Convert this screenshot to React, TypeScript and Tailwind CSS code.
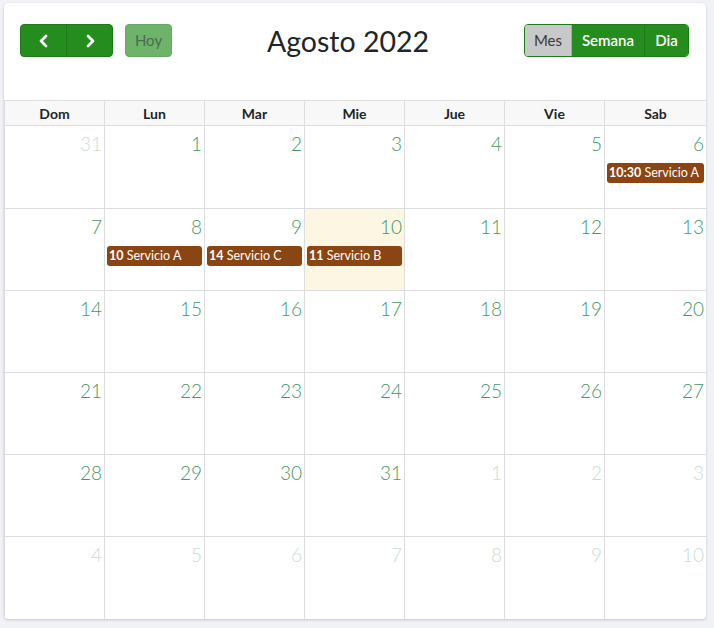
import React from "react";

type Cell = { d: number; out?: boolean; today?: boolean; ev?: { t: string; n: string } };

const weeks: Cell[][] = [
  [{ d: 31, out: true }, { d: 1 }, { d: 2 }, { d: 3 }, { d: 4 }, { d: 5 }, { d: 6, ev: { t: "10:30", n: "Servicio A" } }],
  [{ d: 7 }, { d: 8, ev: { t: "10", n: "Servicio A" } }, { d: 9, ev: { t: "14", n: "Servicio C" } }, { d: 10, today: true, ev: { t: "11", n: "Servicio B" } }, { d: 11 }, { d: 12 }, { d: 13 }],
  [{ d: 14 }, { d: 15 }, { d: 16 }, { d: 17 }, { d: 18 }, { d: 19 }, { d: 20 }],
  [{ d: 21 }, { d: 22 }, { d: 23 }, { d: 24 }, { d: 25 }, { d: 26 }, { d: 27 }],
  [{ d: 28 }, { d: 29 }, { d: 30 }, { d: 31 }, { d: 1, out: true }, { d: 2, out: true }, { d: 3, out: true }],
  [{ d: 4, out: true }, { d: 5, out: true }, { d: 6, out: true }, { d: 7, out: true }, { d: 8, out: true }, { d: 9, out: true }, { d: 10, out: true }],
];

const days = ["Dom", "Lun", "Mar", "Mie", "Jue", "Vie", "Sab"];
const rowH = ["h-[83px]", "h-[82px]", "h-[82px]", "h-[82px]", "h-[82px]", "h-[82px]"];

export default function App() {
  return (
    <div className="min-h-[628px] w-[714px] bg-[#f1f2f6] pt-[3px] pl-[4px]" style={{ fontFamily: "Lato, 'Noto Sans', sans-serif" }}>
      <div className="w-[702px] h-[616px] bg-white rounded-[4px] shadow-[0_1px_3px_rgba(0,0,0,0.18)] overflow-hidden flex flex-col">
        <div className="h-[97px] pl-4 pr-[17px] pt-[21px] flex items-start justify-between">
          <div className="flex items-center gap-3">
            <div className="flex h-[33px] rounded-[4px] overflow-hidden border border-[#1e7a18] bg-[#258c1e]">
              <button className="w-[46px] flex items-center justify-center text-white border-r border-[#1e7a18]">
                <svg width="14" height="14" viewBox="0 0 14 14"><path d="M9 2 L4 7 L9 12" stroke="white" strokeWidth="2.8" fill="none" strokeLinecap="round" strokeLinejoin="round" /></svg>
              </button>
              <button className="w-[45px] flex items-center justify-center text-white">
                <svg width="14" height="14" viewBox="0 0 14 14"><path d="M5 2 L10 7 L5 12" stroke="white" strokeWidth="2.8" fill="none" strokeLinecap="round" strokeLinejoin="round" /></svg>
              </button>
            </div>
            <button className="h-[33px] w-[47px] rounded-[4px] bg-[#6db36a] border border-[#65aa62] text-[#4f6a52] text-[15px]">Hoy</button>
          </div>
          <div className="text-[28.5px] leading-[36px] -mt-[1px] text-[#212529]">Agosto 2022</div>
          <div className="flex h-[33px] rounded-[4px] overflow-hidden border border-[#1e7a18]">
            <button className="w-[47px] bg-[#c8c8c8] text-[#3a3a3a] text-[15px] border-r border-[#aaa]">Mes</button>
            <button className="w-[73px] bg-[#258c1e] text-white text-[15px] font-semibold border-r border-[#1e7a18]">Semana</button>
            <button className="w-[43px] bg-[#258c1e] text-white text-[15px] font-semibold">Dia</button>
          </div>
        </div>
        <div className="grid grid-cols-[100px_100px_100px_100px_100px_100px_101px] border-t border-l border-[#dddddd] bg-[#f8f8f8] h-[26px]">
          {days.map((d, i) => (
            <div key={d} className={`flex items-center justify-center text-[14px] font-bold text-[#212529] border-b border-[#dddddd] ${i < 6 ? "border-r" : ""}`}>{d}</div>
          ))}
        </div>
        <div className="flex flex-col border-l border-[#dddddd]">
          {weeks.map((w, wi) => (
            <div key={wi} className={`grid grid-cols-[100px_100px_100px_100px_100px_100px_101px] ${rowH[wi]} ${wi < 5 ? "border-b border-[#dddddd]" : ""}`}>
              {w.map((c, ci) => (
                <div key={ci} className={`flex flex-col ${ci < 6 ? "border-r border-[#dddddd]" : ""} ${c.today ? "bg-[#fdf6e3]" : ""}`}>
                  <div className={`text-right pr-[2px] pt-[7px] text-[19px] leading-[22px] font-light ${c.out ? "text-[#c9ddd3]" : "text-[#3f9a66]"}`}>{c.d}</div>
                  {c.ev && (
                    <div className="mx-[2px] mt-[8px] h-[20px] rounded-[3px] bg-[#8b4513] text-white text-[12.5px] leading-[20px] pl-[2px] whitespace-nowrap overflow-hidden">
                      <span className="font-bold">{c.ev.t}</span> {c.ev.n}
                    </div>
                  )}
                </div>
              ))}
            </div>
          ))}
        </div>
      </div>
    </div>
  );
}
